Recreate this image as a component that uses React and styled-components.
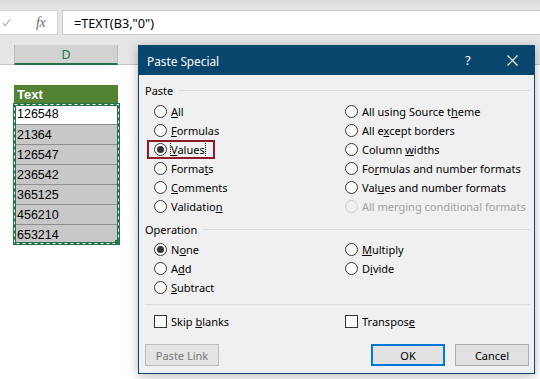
import React from 'react';
import styled, { createGlobalStyle } from 'styled-components';

const GlobalStyle = createGlobalStyle`
  html, body {
    margin: 0;
    padding: 0;
    background: #ffffff;
  }
  body {
    font-family: "Noto Sans", "Open Sans", sans-serif;
  }
`;

const pasteLeft = [
  { label: 'All', key: 0 },
  { label: 'Formulas', key: 0 },
  { label: 'Values', key: 0, checked: true, marked: true },
  { label: 'Formats', key: 5 },
  { label: 'Comments', key: 0 },
  { label: 'Validation', key: 9 },
];

const pasteRight = [
  { label: 'All using Source theme', key: 18 },
  { label: 'All except borders', key: 5 },
  { label: 'Column widths', key: 7 },
  { label: 'Formulas and number formats', key: 2 },
  { label: 'Values and number formats', key: 3 },
  { label: 'All merging conditional formats', disabled: true },
];

const values = ['126548', '21364', '126547', '236542', '365125', '456210', '653214'];

const Mnemonic = ({ text, at }) => {
  if (at === undefined) return text;
  return (
    <>
      {text.slice(0, at)}
      <u>{text[at]}</u>
      {text.slice(at + 1)}
    </>
  );
};

const App = () => {
  return (
    <>
      <GlobalStyle />
      <Page>
        <TopStrip />
        <FormulaBar>
          <NameArea>
            <CheckIcon viewBox="0 0 10 10">
              <polyline points="1,5.5 3.5,8.5 9,1.5" />
            </CheckIcon>
            <Fx>fx</Fx>
          </NameArea>
          <FormulaInput>=TEXT(B3,"0")</FormulaInput>
        </FormulaBar>
        <GapStrip />
        <HeaderRow>
          <Corner />
          <ColHeader>D</ColHeader>
          <HeaderRest />
        </HeaderRow>
        <SheetBody>
          <Column>
            <TitleCell>Text</TitleCell>
            <Range>
              {values.map((v, i) => (
                <Cell key={v} active={i === 0}>{v}</Cell>
              ))}
              <Ants viewBox="0 0 107 142" preserveAspectRatio="none">
                <rect x="1.5" y="1.5" width="104" height="139" fill="none" stroke="#217346" strokeWidth="3" />
                <rect x="1.5" y="1.5" width="104" height="139" fill="none" stroke="#ffffff" strokeWidth="1" strokeDasharray="3 3" />
                <rect x="102" y="137" width="5" height="5" fill="#217346" />
              </Ants>
            </Range>
          </Column>
        </SheetBody>

        <Dialog>
          <TitleBar>
            <DialogTitle>Paste Special</DialogTitle>
            <HelpButton>?</HelpButton>
            <CloseButton>
              <svg width="11" height="11" viewBox="0 0 11 11">
                <path d="M0.5 0.5 L10.5 10.5 M10.5 0.5 L0.5 10.5" stroke="#ffffff" strokeWidth="1.2" />
              </svg>
            </CloseButton>
          </TitleBar>
          <DialogBody>
            <GroupHeader top={7}>
              <span>Paste</span>
              <Rule />
            </GroupHeader>
            <OptionGrid top={4}>
              <OptionColumn>
                {pasteLeft.map((o) => (
                  <Option key={o.label}>
                    <Radio checked={o.checked} />
                    {o.marked ? (
                      <Focused><Mnemonic text={o.label} at={o.key} /></Focused>
                    ) : (
                      <span><Mnemonic text={o.label} at={o.key} /></span>
                    )}
                    {o.marked && <Highlight />}
                  </Option>
                ))}
              </OptionColumn>
              <OptionColumn>
                {pasteRight.map((o) => (
                  <Option key={o.label} disabled={o.disabled}>
                    <Radio disabled={o.disabled} />
                    <span><Mnemonic text={o.label} at={o.key} /></span>
                  </Option>
                ))}
              </OptionColumn>
            </OptionGrid>

            <GroupHeader top={5}>
              <span>Operation</span>
              <Rule />
            </GroupHeader>
            <OptionGrid top={3}>
              <OptionColumn>
                <Option><Radio checked /><span><Mnemonic text="None" at={1} /></span></Option>
                <Option><Radio /><span><Mnemonic text="Add" at={1} /></span></Option>
                <Option><Radio /><span><Mnemonic text="Subtract" at={0} /></span></Option>
              </OptionColumn>
              <OptionColumn>
                <Option><Radio /><span><Mnemonic text="Multiply" at={0} /></span></Option>
                <Option><Radio /><span><Mnemonic text="Divide" at={1} /></span></Option>
              </OptionColumn>
            </OptionGrid>

            <Separator />

            <OptionGrid top={7}>
              <Option><Checkbox /><span>Skip <u>b</u>lanks</span></Option>
              <Option><Checkbox /><span><Mnemonic text="Transpose" at={8} /></span></Option>
            </OptionGrid>

            <ButtonRow>
              <Button disabled>Paste Link</Button>
              <ButtonGroup>
                <Button primary>OK</Button>
                <Button>Cancel</Button>
              </ButtonGroup>
            </ButtonRow>
          </DialogBody>
        </Dialog>
      </Page>
    </>
  );
};

export default App;

// Styled Components...
const Page = styled.div`
  position: relative;
  width: 540px;
  height: 379px;
  overflow: hidden;
  background: #ffffff;
  display: flex;
  flex-direction: column;
`;

const TopStrip = styled.div`
  height: 10px;
  background: linear-gradient(#dadada, #e6e6e6);
`;

const FormulaBar = styled.div`
  height: 25px;
  display: flex;
  gap: 4px;
  background: #e6e6e6;
`;

const NameArea = styled.div`
  width: 58px;
  box-sizing: border-box;
  background: #ffffff;
  border: 1px solid #d4d4d4;
  border-left: none;
  display: flex;
  align-items: center;
  padding-left: 2px;
`;

const CheckIcon = styled.svg`
  width: 9px;
  height: 9px;
  fill: none;
  stroke: #b5b5b5;
  stroke-width: 1.4;
`;

const Fx = styled.span`
  margin-left: 25px;
  font-family: "Liberation Serif", serif;
  font-style: italic;
  font-size: 14px;
  color: #6b6b6b;
  letter-spacing: -0.5px;
`;

const FormulaInput = styled.div`
  flex: 1;
  box-sizing: border-box;
  background: #ffffff;
  border: 1px solid #c8c8c8;
  border-right: none;
  display: flex;
  align-items: center;
  padding-left: 11px;
  font-family: "Noto Sans", sans-serif;
  font-size: 12.7px;
  color: #000000;
`;

const GapStrip = styled.div`
  height: 10px;
  background: #e6e6e6;
`;

const HeaderRow = styled.div`
  height: 20px;
  display: flex;
  background: #e6e6e6;
`;

const Corner = styled.div`
  width: 14px;
  border-bottom: 1px solid #c6c6c6;
`;

const ColHeader = styled.div`
  width: 104px;
  box-sizing: border-box;
  background: #d2d2d2;
  border-left: 1px solid #bcbcbc;
  border-right: 1px solid #bcbcbc;
  border-bottom: 2px solid #217346;
  display: flex;
  align-items: center;
  justify-content: center;
  font-family: "Noto Sans", sans-serif;
  font-size: 12.5px;
  color: #217346;
`;

const HeaderRest = styled.div`
  flex: 1;
  border-bottom: 1px solid #c6c6c6;
`;

const SheetBody = styled.div`
  flex: 1;
  background: #ffffff;
  padding: 20px 0 0 14px;
`;

const Column = styled.div`
  width: 104px;
  display: flex;
  flex-direction: column;
`;

const TitleCell = styled.div`
  height: 19px;
  background: #548235;
  color: #ffffff;
  font-family: "Liberation Sans", Arial, sans-serif;
  font-weight: bold;
  font-size: 13px;
  line-height: 19px;
  padding-left: 3px;
`;

const Range = styled.div`
  position: relative;
  display: flex;
  flex-direction: column;
`;

const Cell = styled.div`
  height: 20px;
  box-sizing: border-box;
  background: ${(p) => (p.active ? '#ffffff' : '#c8c8c8')};
  border-top: ${(p) => (p.active ? 'none' : '1px solid #8e8e8e')};
  font-family: "Liberation Sans", Arial, sans-serif;
  font-size: 12.5px;
  line-height: 20px;
  padding-left: 3px;
  color: #000000;
`;

const Ants = styled.svg`
  position: absolute;
  left: -1px;
  top: -1px;
  width: 107px;
  height: 142px;
  overflow: visible;
`;

const Dialog = styled.div`
  position: absolute;
  left: 138px;
  top: 45px;
  width: 397px;
  height: 329px;
  box-sizing: border-box;
  border: 1px solid #0b466d;
  background: #f0f0f0;
  box-shadow: 0 2px 10px rgba(0, 0, 0, 0.28);
  display: flex;
  flex-direction: column;
  font-family: "Noto Sans", sans-serif;
  font-size: 11px;
  color: #000000;
`;

const TitleBar = styled.div`
  height: 29px;
  background: #08466e;
  display: flex;
  align-items: center;
  color: #ffffff;
`;

const DialogTitle = styled.div`
  flex: 1;
  padding-left: 8px;
  font-size: 11.8px;
`;

const HelpButton = styled.div`
  width: 46px;
  text-align: center;
  font-size: 12.5px;
`;

const CloseButton = styled.div`
  width: 43px;
  display: flex;
  justify-content: center;
  align-items: center;
`;

const DialogBody = styled.div`
  flex: 1;
  padding: 0 4px 0 6px;
  display: flex;
  flex-direction: column;
`;

const GroupHeader = styled.div`
  margin-top: ${(p) => p.top}px;
  height: 16px;
  display: flex;
  align-items: center;
  gap: 6px;
`;

const Rule = styled.div`
  flex: 1;
  height: 1px;
  background: #dcdcdc;
`;

const OptionGrid = styled.div`
  margin-top: ${(p) => p.top}px;
  padding-left: 9px;
  display: grid;
  grid-template-columns: 191px 1fr;
`;

const OptionColumn = styled.div`
  display: flex;
  flex-direction: column;
`;

const Option = styled.div`
  position: relative;
  height: 19px;
  display: flex;
  align-items: center;
  gap: 4px;
  color: ${(p) => (p.disabled ? '#a0a0a0' : '#000000')};
  white-space: nowrap;
`;

const Radio = styled.span`
  width: 13px;
  height: 13px;
  box-sizing: border-box;
  border-radius: 50%;
  border: 1px solid ${(p) => (p.disabled ? '#cccccc' : '#333333')};
  background: ${(p) => (p.disabled ? '#f0f0f0' : '#ffffff')};
  display: flex;
  align-items: center;
  justify-content: center;
  flex-shrink: 0;

  &::after {
    content: '';
    display: ${(p) => (p.checked ? 'block' : 'none')};
    width: 7px;
    height: 7px;
    border-radius: 50%;
    background: #333333;
  }
`;

const Checkbox = styled.span`
  width: 13px;
  height: 13px;
  box-sizing: border-box;
  border: 1px solid #333333;
  background: #ffffff;
  flex-shrink: 0;
`;

const Focused = styled.span`
  outline: 1px dotted #000000;
  outline-offset: 0;
  line-height: 15px;
`;

const Highlight = styled.div`
  position: absolute;
  left: -7px;
  top: 0;
  width: 68px;
  height: 19px;
  box-sizing: border-box;
  border: 2px solid #8b1b2b;
  pointer-events: none;
`;

const Separator = styled.div`
  margin-top: 7px;
  height: 1px;
  background: #dcdcdc;
`;

const ButtonRow = styled.div`
  margin-top: 13px;
  padding-right: 1px;
  display: flex;
  justify-content: space-between;
`;

const ButtonGroup = styled.div`
  display: flex;
  gap: 10px;
`;

const Button = styled.button`
  width: 74px;
  height: 22px;
  box-sizing: border-box;
  padding: 0;
  font-family: "Noto Sans", sans-serif;
  font-size: 11px;
  background: ${(p) => (p.disabled ? '#e4e4e4' : '#e1e1e1')};
  color: ${(p) => (p.disabled ? '#777777' : '#000000')};
  border: ${(p) => (p.primary ? '2px solid #0078d7' : '1px solid #adadad')};
  border-color: ${(p) => (p.disabled ? '#bcbcbc' : p.primary ? '#0078d7' : '#adadad')};
`;
